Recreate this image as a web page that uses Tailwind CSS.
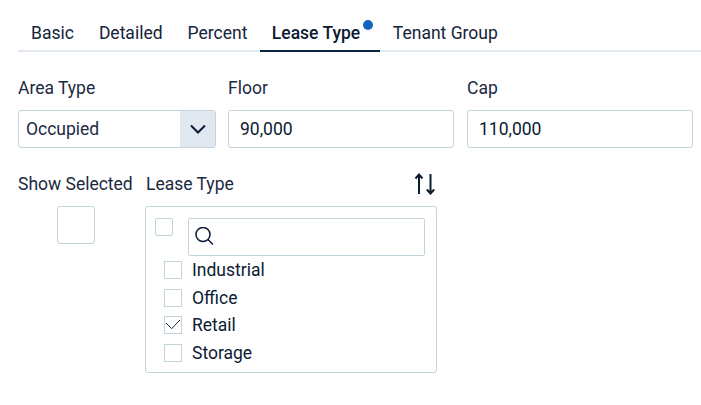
<!DOCTYPE html>
<html lang="en">
<head>
  <meta charset="UTF-8" />
  <title>Lease Type</title>
  <script src="https://cdn.jsdelivr.net/npm/@tailwindcss/browser@4"></script>
</head>
<body class="bg-white font-['Roboto',sans-serif] text-[17.5px] leading-[20px] text-[#1b2a41] overflow-hidden">
  <div class="w-[701px] h-[405px] pl-[18px] pt-[14px]">
    <!-- Tabs -->
    <div class="flex h-[38px] border-b-2 border-[#e2e8f0] text-[#14233a]">
      <div class="pl-[13px] pr-[12.5px] pt-[9px]">Basic</div>
      <div class="px-[12.5px] pt-[9px]">Detailed</div>
      <div class="px-[12.5px] pt-[9px]">Percent</div>
      <div class="relative w-[120px] h-[38px] pl-[12px] pt-[9px] font-medium border-b-2 border-[#0b2545] text-[#0b1b33] whitespace-nowrap">
        Lease Type
        <span class="absolute left-[103px] top-[6px] w-[10px] h-[10px] rounded-full bg-[#1565c0]"></span>
      </div>
      <div class="px-[13px] pt-[9px]">Tenant Group</div>
    </div>

    <!-- Area type / floor / cap -->
    <div class="flex mt-[26px]">
      <div class="w-[198px] mr-[12px]">
        <div class="h-[20px] mb-[12px]">Area Type</div>
        <div class="flex h-[38px] border border-[#c3d3dc] rounded-[3px] overflow-hidden">
          <div class="flex-1 pl-[7px] pt-[8px]">Occupied</div>
          <div class="w-[35px] bg-[#e2e8f0] flex items-center justify-center">
            <svg width="16" height="10" viewBox="0 0 16 10" fill="none" stroke="#0b1b33" stroke-width="2"><path d="M1 1.500 8 8.500l7-7"/></svg>
          </div>
        </div>
      </div>
      <div class="w-[226px] mr-[13px]">
        <div class="h-[20px] mb-[12px]">Floor</div>
        <div class="h-[38px] border border-[#c3d3dc] rounded-[3px] pl-[11px] pt-[8px] text-[#0b1b33]">90,000</div>
      </div>
      <div class="w-[226px]">
        <div class="h-[20px] mb-[12px]">Cap</div>
        <div class="h-[38px] border border-[#c3d3dc] rounded-[3px] pl-[11px] pt-[8px] text-[#0b1b33]">110,000</div>
      </div>
    </div>

    <!-- Show selected / lease type list -->
    <div class="flex mt-[26px]">
      <div class="w-[128px]">
        <div class="h-[20px] mb-[12px] whitespace-nowrap">Show Selected</div>
        <div class="w-[38px] h-[38px] ml-[39px] border border-[#c3d3dc] rounded-[3px]"></div>
      </div>
      <div class="w-[292px] -ml-[1px]">
        <div class="flex justify-between h-[20px] mb-[12px]">
          <span class="pl-[1px]">Lease Type</span>
          <svg class="mr-[1px] -mt-[2px]" width="22" height="24" viewBox="0 0 22 24" fill="none" stroke="#0b1b33" stroke-width="2"><path d="M5 22V2.500M1.500 6.500 5 2.500 8.500 6.500M16.500 2V21.500M12.800 17.500 16.500 21.500 20.200 17.500"/></svg>
        </div>
        <div class="h-[167px] border border-[#c3d3dc] rounded-[3px] pl-[9px] pr-[11px] pt-[11px]">
          <div class="flex">
            <div class="w-[18px] h-[18px] border border-[#c3d3dc] rounded-[2px] mr-[15px]"></div>
            <div class="flex-1 h-[38px] border border-[#c3d3dc] rounded-[2px] flex items-center pl-[6px]">
              <svg width="20" height="20" viewBox="0 0 20 20" fill="none" stroke="#0b1b33" stroke-width="1.500"><circle cx="8" cy="7.500" r="7"/><path d="m13 12.500 5 5"/></svg>
            </div>
          </div>
          <div class="pl-[9px] mt-[0.5px]">
            <div class="flex items-center h-[27.500px]">
              <span class="w-[18px] h-[18px] border border-[#c3d3dc] mr-[10px]"></span><span class="text-[#0b1b33]">Industrial</span>
            </div>
            <div class="flex items-center h-[27.500px]">
              <span class="w-[18px] h-[18px] border border-[#c3d3dc] mr-[10px]"></span><span class="text-[#0b1b33]">Office</span>
            </div>
            <div class="flex items-center h-[27.500px]">
              <span class="w-[18px] h-[18px] border border-[#c3d3dc] mr-[10px] flex items-center justify-center">
                <svg class="overflow-visible" width="14" height="12" viewBox="0 0 14 12" fill="none" stroke="#1b2a41" stroke-width="1"><path d="M0 4 5.700 9.700 14 1"/></svg>
              </span><span class="text-[#0b1b33]">Retail</span>
            </div>
            <div class="flex items-center h-[27.500px]">
              <span class="w-[18px] h-[18px] border border-[#c3d3dc] mr-[10px]"></span><span class="text-[#0b1b33]">Storage</span>
            </div>
          </div>
        </div>
      </div>
    </div>
  </div>
</body>
</html>
